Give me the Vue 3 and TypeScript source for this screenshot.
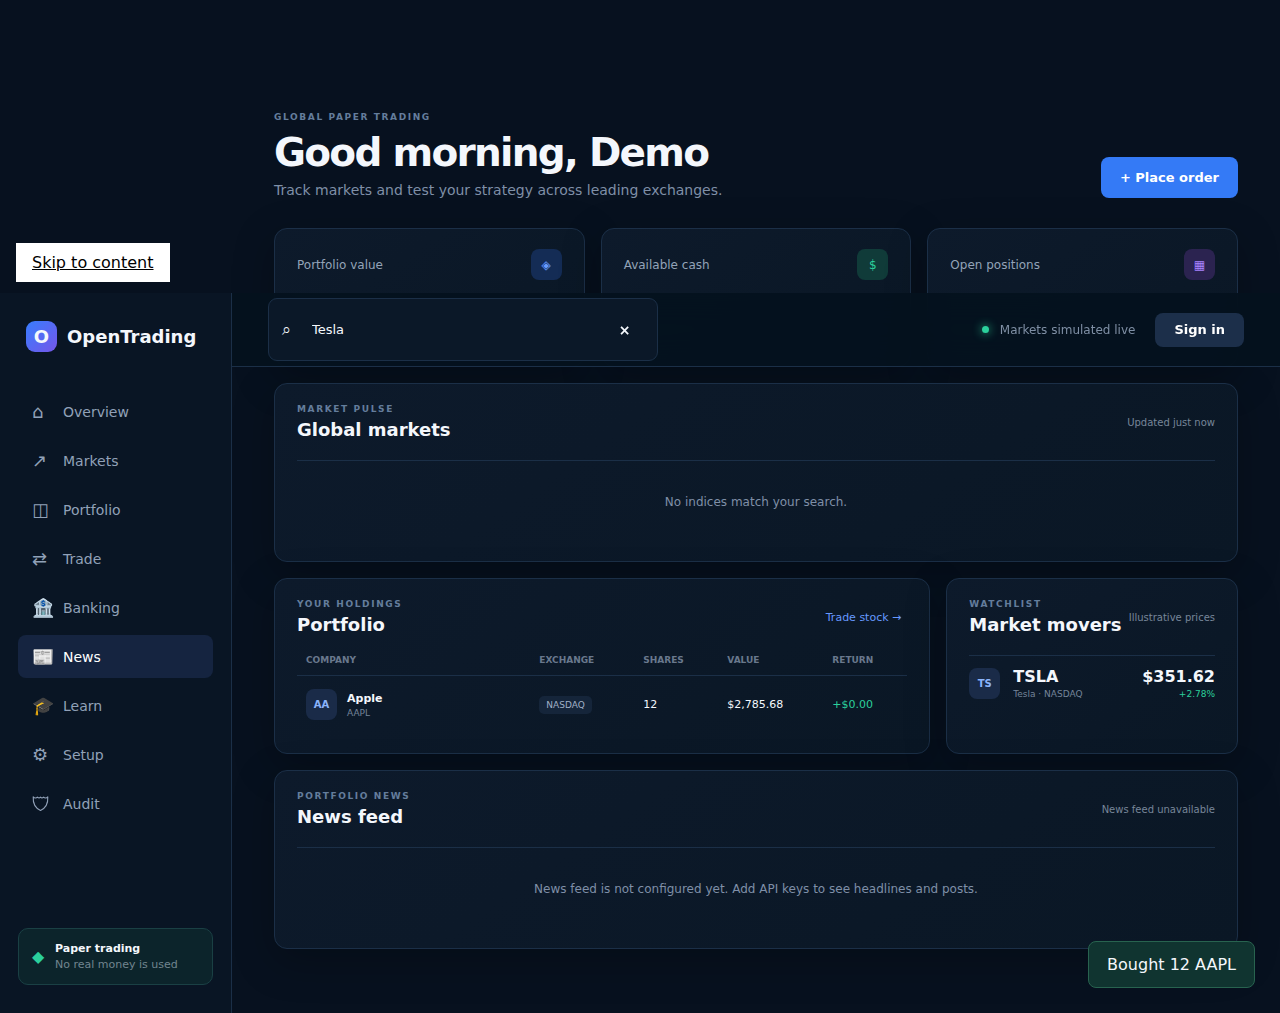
<script setup lang="ts">
import { ref } from 'vue'

interface NavItem { icon: string; label: string }
interface Stat { label: string; icon: string; tone: string }
interface Holding { initials: string; name: string; symbol: string; exchange: string; shares: number; value: string; gain: string }
interface Mover { initials: string; symbol: string; detail: string; price: string; change: string }

const nav: NavItem[] = [
  { icon: '⌂', label: 'Overview' },
  { icon: '↗', label: 'Markets' },
  { icon: '◫', label: 'Portfolio' },
  { icon: '⇄', label: 'Trade' },
  { icon: '🏦', label: 'Banking' },
  { icon: '📰', label: 'News' },
  { icon: '🎓', label: 'Learn' },
  { icon: '⚙', label: 'Setup' },
  { icon: 'shield', label: 'Audit' },
]
const active = ref('News')
const query = ref('Tesla')

const stats: Stat[] = [
  { label: 'Portfolio value', icon: '◈', tone: 'blue' },
  { label: 'Available cash', icon: '$', tone: 'green' },
  { label: 'Open positions', icon: '▦', tone: 'purple' },
]
const holdings: Holding[] = [
  { initials: 'AA', name: 'Apple', symbol: 'AAPL', exchange: 'NASDAQ', shares: 12, value: '$2,785.68', gain: '+$0.00' },
]
const movers: Mover[] = [
  { initials: 'TS', symbol: 'TSLA', detail: 'Tesla · NASDAQ', price: '$351.62', change: '+2.78%' },
]
</script>

<template>
  <div class="shell">
    <a class="skip" href="#content">Skip to content</a>

    <aside class="sidebar">
      <div class="brand"><span class="logo">O</span>OpenTrading</div>
      <nav class="nav" aria-label="Main">
        <button
          v-for="item in nav"
          :key="item.label"
          type="button"
          class="nav-item"
          :class="{ active: item.label === active }"
          @click="active = item.label"
        >
          <span class="nav-icon" aria-hidden="true">
            <svg v-if="item.icon === 'shield'" width="17" height="18" viewBox="0 0 17 18">
              <path
                d="M1.2 1.8 C2.6 3.4 4.4 3.3 5.4 2.1 C6.6 3.1 7.6 3 8.5 2.1 C9.4 3 10.4 3.1 11.6 2.1 C12.6 3.3 14.4 3.4 15.8 1.8 C16.2 9.2 14.2 13 8.5 15.4 C2.8 13 0.8 9.2 1.2 1.8 Z"
                fill="none"
                stroke="currentColor"
                stroke-width="1.1"
                stroke-linejoin="round"
              />
            </svg>
            <template v-else>{{ item.icon }}</template>
          </span>{{ item.label }}
        </button>
      </nav>
      <div class="notice">
        <span class="notice-icon" aria-hidden="true">◆</span>
        <div>
          <strong>Paper trading</strong>
          <small>No real money is used</small>
        </div>
      </div>
    </aside>

    <div class="main">
      <header class="topbar">
        <div class="search">
          <label for="search" aria-label="Search">⌕</label>
          <input id="search" v-model="query" type="text" />
          <button type="button" aria-label="Clear search" @click="query = ''">×</button>
        </div>
        <div class="status">
          <span class="dot"></span>
          <span>Markets simulated live</span>
          <button type="button" class="sign-in">Sign in</button>
        </div>
      </header>

      <main id="content" class="content">
        <section class="hero">
          <div>
            <p class="eyebrow">GLOBAL PAPER TRADING</p>
            <h1>Good morning, Demo</h1>
            <p class="lead">Track markets and test your strategy across leading exchanges.</p>
          </div>
          <button type="button" class="primary">+ Place order</button>
        </section>

        <section class="stats">
          <article v-for="stat in stats" :key="stat.label" class="card stat">
            <span>{{ stat.label }}</span>
            <span class="stat-icon" :class="stat.tone" aria-hidden="true">{{ stat.icon }}</span>
          </article>
        </section>

        <section class="card panel">
          <div class="panel-head">
            <div>
              <p class="eyebrow">MARKET PULSE</p>
              <h2>Global markets</h2>
            </div>
            <span class="meta">Updated just now</span>
          </div>
          <p class="empty">No indices match your search.</p>
        </section>

        <div class="split">
          <section class="card panel">
            <div class="panel-head tight">
              <div>
                <p class="eyebrow">YOUR HOLDINGS</p>
                <h2>Portfolio</h2>
              </div>
              <button type="button" class="text-button">Trade stock →</button>
            </div>
            <table>
              <thead>
                <tr>
                  <th>COMPANY</th>
                  <th class="col-exchange">EXCHANGE</th>
                  <th class="col-small">SHARES</th>
                  <th class="col-value">VALUE</th>
                  <th class="col-small">RETURN</th>
                </tr>
              </thead>
              <tbody>
                <tr v-for="row in holdings" :key="row.symbol">
                  <td>
                    <div class="company">
                      <span class="avatar">{{ row.initials }}</span>
                      <div>
                        <strong>{{ row.name }}</strong>
                        <small>{{ row.symbol }}</small>
                      </div>
                    </div>
                  </td>
                  <td><span class="tag">{{ row.exchange }}</span></td>
                  <td>{{ row.shares }}</td>
                  <td>{{ row.value }}</td>
                  <td class="up">{{ row.gain }}</td>
                </tr>
              </tbody>
            </table>
          </section>

          <section class="card panel">
            <div class="panel-head">
              <div>
                <p class="eyebrow">WATCHLIST</p>
                <h2>Market movers</h2>
              </div>
              <span class="meta">Illustrative prices</span>
            </div>
            <div v-for="m in movers" :key="m.symbol" class="mover">
              <span class="avatar">{{ m.initials }}</span>
              <div class="mover-name">
                <strong>{{ m.symbol }}</strong>
                <small>{{ m.detail }}</small>
              </div>
              <div class="mover-price">
                <strong>{{ m.price }}</strong>
                <small class="up">{{ m.change }}</small>
              </div>
            </div>
          </section>
        </div>

        <section class="card panel">
          <div class="panel-head">
            <div>
              <p class="eyebrow">PORTFOLIO NEWS</p>
              <h2>News feed</h2>
            </div>
            <span class="meta">News feed unavailable</span>
          </div>
          <p class="empty">News feed is not configured yet. Add API keys to see headlines and posts.</p>
        </section>
      </main>
    </div>

    <div class="toast" role="status">Bought 12 AAPL</div>
  </div>
</template>

<style>
body {
  margin: 0;
  background: #07111f;
}
</style>

<style scoped>
* {
  box-sizing: border-box;
}
.shell {
  --line: #1b2f47;
  --dock: 293px;
  display: grid;
  grid-template-columns: 232px minmax(0, 1fr);
  min-height: 100vh;
  color: #f4f7fc;
  font-family: "DejaVu Sans", sans-serif;
  font-size: 16px;
}
button,
input {
  font-family: inherit;
  color: inherit;
  border: 0;
  background: none;
  padding: 0;
  margin: 0;
}
button {
  cursor: pointer;
}
h1,
h2,
p {
  margin: 0;
}
.skip {
  position: absolute;
  left: 16px;
  top: 243px;
  padding: 10px 16px;
  background: #fff;
  color: #000;
  line-height: 19px;
}

/* Sidebar */
.sidebar {
  position: sticky;
  top: var(--dock);
  height: calc(100vh - var(--dock));
  display: flex;
  flex-direction: column;
  padding: 28px 18px;
  background: #091524;
  border-right: 1px solid var(--line);
}
.brand {
  display: flex;
  align-items: center;
  gap: 10px;
  padding: 0 8px;
  font-size: 18px;
  font-weight: 700;
}
.logo {
  display: grid;
  place-items: center;
  width: 31px;
  height: 31px;
  border-radius: 9px;
  background: linear-gradient(135deg, #377dff, #7556e8);
}
.nav {
  display: flex;
  flex-direction: column;
  gap: 6px;
  margin-top: 38px;
}
.nav-item {
  display: flex;
  align-items: center;
  gap: 11px;
  height: 43px;
  padding: 0 14px;
  border-radius: 8px;
  color: #91a1b8;
  font-size: 14px;
  text-align: left;
}
.nav-item.active {
  background: #152440;
  color: #fff;
}
.nav-icon {
  width: 20px;
  font-size: 18px;
}
.nav-icon svg {
  display: block;
}
.notice {
  display: flex;
  align-items: center;
  gap: 9px;
  margin-top: auto;
  padding: 12px 13px;
  border: 1px solid #1a4044;
  border-radius: 10px;
  background: #0c242b;
}
.notice-icon {
  width: 14px;
  color: #2bd09c;
  font-size: 16px;
}
.notice strong,
.notice small {
  display: block;
  font-size: 11px;
  line-height: 16px;
}
.notice small {
  color: #71848f;
  line-height: 15px;
}

/* Top bar */
.main {
  min-width: 0;
}
.topbar {
  position: sticky;
  top: var(--dock);
  z-index: 2;
  display: flex;
  align-items: center;
  justify-content: space-between;
  height: 74px;
  padding: 0 36px;
  border-bottom: 1px solid var(--line);
  background: rgba(4, 17, 29, 0.92);
  backdrop-filter: blur(16px);
}
.search {
  display: flex;
  align-items: center;
  width: 390px;
  height: 63px;
  padding: 0 13px;
  border: 1px solid var(--line);
  border-radius: 9px;
  background: #0b1828;
}
.search label {
  width: 30px;
  font-size: 16px;
}
.search input {
  flex: 1;
  min-width: 0;
  font-size: 13px;
  outline: 0;
}
.search button {
  width: 39px;
  height: 41px;
  font-size: 14px;
  font-weight: 700;
}
.status {
  display: flex;
  align-items: center;
  color: #7f8fa5;
  font-size: 12px;
}
.dot {
  width: 7px;
  height: 7px;
  margin-right: 11px;
  border-radius: 50%;
  background: #2bd09c;
  box-shadow: 0 0 10px #2bd09c;
}
.sign-in {
  height: 34px;
  margin-left: 20px;
  padding: 0 19px;
  border-radius: 8px;
  background: #1c2f4a;
  color: #fff;
  font-size: 13px;
  font-weight: 700;
}

/* Content */
.content {
  display: flex;
  flex-direction: column;
  gap: 16px;
  padding: 38px 42px 64px;
}
.hero {
  display: flex;
  align-items: flex-end;
  justify-content: space-between;
  margin-bottom: 14px;
}
.eyebrow {
  color: #647d9c;
  font-size: 9px;
  font-weight: 700;
  line-height: 11px;
  letter-spacing: 0.18em;
}
h1 {
  margin: 7px 0;
  font-size: 39px;
  line-height: 45px;
  letter-spacing: -0.044em;
}
.lead {
  color: #7f8fa7;
  font-size: 14px;
  line-height: 16px;
}
.primary {
  height: 41px;
  padding: 0 19px;
  border-radius: 8px;
  background: #347af6;
  color: #fff;
  font-size: 13px;
  font-weight: 700;
}
.card {
  border: 1px solid var(--line);
  border-radius: 13px;
  background: linear-gradient(145deg, #0d1a2b, #0a1725);
  box-shadow: 0 12px 40px rgba(0, 0, 0, 0.25);
}
.stats {
  display: grid;
  grid-template-columns: repeat(3, minmax(0, 1fr));
  gap: 16px;
}
.stat {
  display: flex;
  justify-content: space-between;
  min-height: 139px;
  padding: 20px 22px;
  color: #93a3b8;
  font-size: 12px;
  line-height: 32px;
}
.stat-icon {
  width: 31px;
  height: 31px;
  border-radius: 8px;
  text-align: center;
}
.blue {
  background: #142c55;
  color: #669bff;
}
.green {
  background: #103b39;
  color: #2bd09c;
}
.purple {
  background: #2b2350;
  color: #a982ff;
}
.panel {
  padding: 20px 22px;
}
.panel-head {
  display: flex;
  align-items: center;
  justify-content: space-between;
  margin-bottom: 20px;
}
.panel-head.tight {
  margin-bottom: 11px;
}
h2 {
  margin-top: 4px;
  font-size: 18px;
  line-height: 21px;
  white-space: nowrap;
}
.meta {
  color: #778699;
  font-size: 10px;
  white-space: nowrap;
}
.empty {
  height: 81px;
  border-top: 1px solid var(--line);
  color: #7f8fa7;
  font-size: 12px;
  line-height: 82px;
  text-align: center;
}
.split {
  display: grid;
  grid-template-columns: minmax(0, 9fr) minmax(0, 4fr);
  gap: 16px;
}
.text-button {
  padding: 6px;
  color: #6699ff;
  font-size: 11px;
}
table {
  width: 100%;
  border-collapse: collapse;
  font-size: 11px;
}
th {
  padding: 9px;
  border-bottom: 1px solid var(--line);
  color: #69788d;
  font-size: 9px;
  line-height: 11px;
  text-align: left;
}
.col-exchange {
  width: 104px;
}
.col-value {
  width: 105px;
}
.col-small {
  width: 84px;
}
td {
  padding: 13px 9px;
}
.company {
  display: flex;
  align-items: center;
  gap: 10px;
}
.avatar {
  flex: none;
  display: grid;
  place-items: center;
  width: 31px;
  height: 31px;
  border-radius: 8px;
  background: #1a2b48;
  color: #8bb4fb;
  font-size: 10px;
  font-weight: 700;
}
.company strong,
.company small {
  display: block;
  line-height: 17px;
}
.company small {
  line-height: 12px;
}
small {
  color: #74849a;
  font-size: 9px;
}
.tag {
  display: inline-block;
  padding: 4px 7px;
  border-radius: 5px;
  background: #15253a;
  color: #a0b0c6;
  font-size: 9px;
  line-height: 10px;
}
.up,
.mover .up {
  color: #2bd09c;
}
.mover {
  display: flex;
  align-items: center;
  gap: 13px;
  padding: 9px 0;
  border-top: 1px solid var(--line);
}
.mover strong,
.mover small {
  display: block;
}
.mover strong {
  line-height: 23px;
}
.mover small {
  line-height: 13px;
}
.mover-price {
  margin-left: auto;
  text-align: right;
}

.toast {
  position: fixed;
  right: 25px;
  bottom: 25px;
  z-index: 3;
  padding: 13px 18px;
  border: 1px solid #28634f;
  border-radius: 8px;
  background: #103430;
  line-height: 19px;
}
</style>
